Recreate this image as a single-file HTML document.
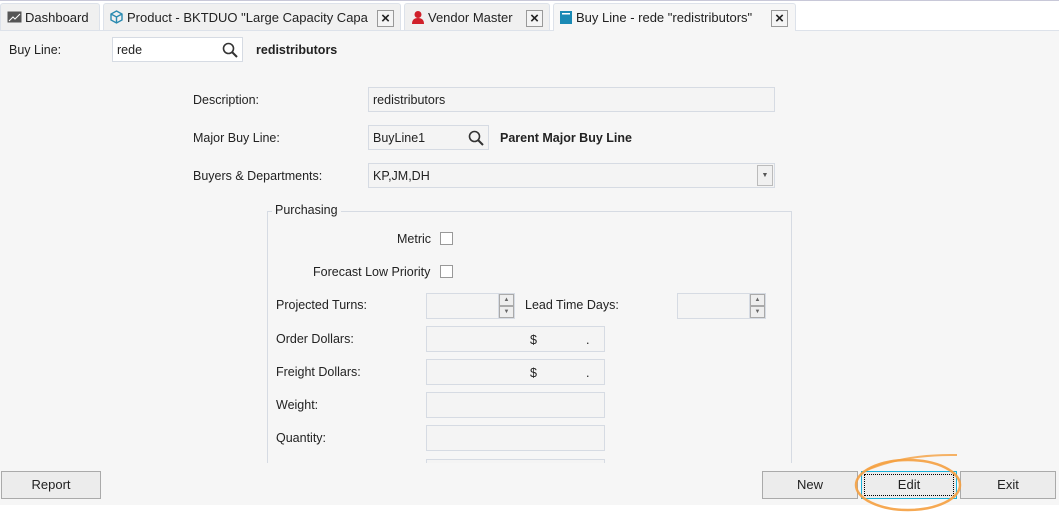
<!DOCTYPE html>
<html><head><meta charset="utf-8"><style>
*{box-sizing:border-box;margin:0;padding:0}
body{width:1059px;height:523px;background:#fff;font-family:"Liberation Sans",sans-serif;font-size:12.5px;color:#222;position:relative;overflow:hidden}
.a{position:absolute}
.tab{position:absolute;top:3px;height:27px;background:#f0f0f0;border:1px solid #dde2ea;border-bottom:none;border-radius:3px 3px 0 0;font-size:13px;line-height:28px;padding-left:6px;white-space:nowrap;overflow:hidden}
.x{position:absolute;top:6px;width:17px;height:17px;border:1px solid #999;background:#f4f4f4;font-weight:bold;font-size:15px;line-height:15px;text-align:center}
.in{position:absolute;border:1px solid #d6dbe3;background:#f4f4f4;height:25px;line-height:25px;padding-left:4px}
.btn{position:absolute;top:471px;height:28px;border:1px solid #aaa;background:#ececec;text-align:center;line-height:26px;font-size:13px}
.lbl{position:absolute}
.cb{position:absolute;width:13px;height:13px;border:1px solid #999;background:#fff}
.spin{position:absolute;width:16px;height:25px;border-left:1px solid #d6dbe3}
.spin div{height:12px;border:1px solid #aaa;background:#eee;font-size:6px;line-height:10px;text-align:center;color:#666}
</style></head><body>
<div class="a" style="left:0;top:0;width:1059px;height:1px;background:#c8c8d8"></div>
<div class="a" style="left:0;top:30px;width:1059px;height:475px;background:#f6f6f6;border-top:1px solid #dde2ea"></div>

<div class="tab" style="left:0;width:100px"><svg width="15" height="12" style="vertical-align:-1px;margin-right:3px"><rect x="0.5" y="0.5" width="14" height="11" fill="#555"/><polyline points="2,10 6,6 8,8 13,3" stroke="#fff" fill="none" stroke-width="1"/></svg>Dashboard</div>
<div class="tab" style="left:103px;width:298px"><svg width="13" height="14" style="vertical-align:-2px;margin-right:4px"><path d="M6.5 1 L12 4 L12 10 L6.5 13 L1 10 L1 4 Z M1 4 L6.5 7 L12 4 M6.5 7 L6.5 13" stroke="#2a8ab0" fill="none" stroke-width="1.4"/></svg>Product - BKTDUO "Large Capacity Capa<div class="x" style="left:273px">×</div></div>
<div class="tab" style="left:404px;width:146px"><svg width="14" height="14" style="vertical-align:-2px;margin-right:3px"><circle cx="7" cy="4.5" r="3.5" fill="#d0202a"/><path d="M1 14 Q1 8 7 8 Q13 8 13 14Z" fill="#d0202a"/></svg>Vendor Master<div class="x" style="left:121px">×</div></div>
<div class="tab" style="left:553px;width:243px;background:#f6f6f6;height:28px"><svg width="12" height="13" style="vertical-align:-2px;margin-right:4px"><rect width="12" height="13" fill="#1a8ab5"/><rect x="2" y="2" width="8" height="1.5" fill="#fff"/></svg>Buy Line - rede "redistributors"<div class="x" style="left:217px">×</div></div>

<div class="lbl" style="left:9px;top:43px">Buy Line:</div>
<div class="in" style="left:112px;top:37px;width:131px;background:#fff">rede<svg class="a" style="right:4px;top:4px" width="16" height="16"><circle cx="6.5" cy="6.5" r="5" stroke="#333" stroke-width="1.6" fill="none"/><line x1="10" y1="10" x2="15" y2="15" stroke="#333" stroke-width="2"/></svg></div>
<div class="lbl" style="left:256px;top:43px;font-weight:bold">redistributors</div>

<div class="lbl" style="left:193px;top:93px">Description:</div>
<div class="in" style="left:368px;top:87px;width:407px">redistributors</div>
<div class="lbl" style="left:193px;top:131px">Major Buy Line:</div>
<div class="in" style="left:368px;top:125px;width:121px">BuyLine1<svg class="a" style="right:4px;top:4px" width="16" height="16"><circle cx="6.5" cy="6.5" r="5" stroke="#333" stroke-width="1.6" fill="none"/><line x1="10" y1="10" x2="15" y2="15" stroke="#333" stroke-width="2"/></svg></div>
<div class="lbl" style="left:500px;top:131px;font-weight:bold">Parent Major Buy Line</div>
<div class="lbl" style="left:193px;top:169px">Buyers &amp; Departments:</div>
<div class="in" style="left:368px;top:163px;width:407px">KP,JM,DH<div class="a" style="right:1px;top:1px;width:16px;height:21px;border:1px solid #bbb;background:#f0f0f0;font-size:7px;text-align:center;line-height:19px;color:#555">▼</div></div>

<div class="a" style="left:267px;top:211px;width:525px;height:252px;border:1px solid #d6dbe3;border-bottom:none"></div>
<div class="lbl" style="left:272px;top:203px;background:#f6f6f6;padding:0 3px">Purchasing</div>
<div class="lbl" style="left:397px;top:232px">Metric</div><div class="cb" style="left:440px;top:232px"></div>
<div class="lbl" style="left:313px;top:265px">Forecast Low Priority</div><div class="cb" style="left:440px;top:265px"></div>
<div class="lbl" style="left:276px;top:298px">Projected Turns:</div>
<div class="in" style="left:426px;top:293px;width:89px;height:26px"><div class="spin" style="right:0;top:0"><div>▲</div><div>▼</div></div></div>
<div class="lbl" style="left:525px;top:298px">Lead Time Days:</div>
<div class="in" style="left:677px;top:293px;width:89px;height:26px"><div class="spin" style="right:0;top:0"><div>▲</div><div>▼</div></div></div>
<div class="lbl" style="left:276px;top:332px">Order Dollars:</div>
<div class="in" style="left:426px;top:326px;width:179px;height:26px"><span class="a" style="left:103px;top:1px">$</span><span class="a" style="left:159px;top:1px">.</span></div>
<div class="lbl" style="left:276px;top:365px">Freight Dollars:</div>
<div class="in" style="left:426px;top:359px;width:179px;height:26px"><span class="a" style="left:103px;top:1px">$</span><span class="a" style="left:159px;top:1px">.</span></div>
<div class="lbl" style="left:276px;top:398px">Weight:</div>
<div class="in" style="left:426px;top:392px;width:179px;height:26px"></div>
<div class="lbl" style="left:276px;top:431px">Quantity:</div>
<div class="in" style="left:426px;top:425px;width:179px;height:26px"></div>
<div class="in" style="left:426px;top:459px;width:179px;height:4px;border-bottom:none"></div>

<div class="btn" style="left:1px;width:100px">Report</div>
<div class="btn" style="left:762px;width:96px">New</div>
<div class="btn" style="left:861px;width:96px;border:1px solid #1ab0d8;outline:1px dotted #000;outline-offset:-4px">Edit</div>
<div class="btn" style="left:960px;width:96px">Exit</div>
<svg class="a" style="left:845px;top:450px" width="125" height="65"><ellipse cx="63" cy="35" rx="52" ry="25" fill="none" stroke="#f5a040" stroke-width="2.5" opacity="0.9"/><path d="M22 20 Q60 4 112 5" fill="none" stroke="#f5a040" stroke-width="2" opacity="0.8"/></svg>
</body></html>
